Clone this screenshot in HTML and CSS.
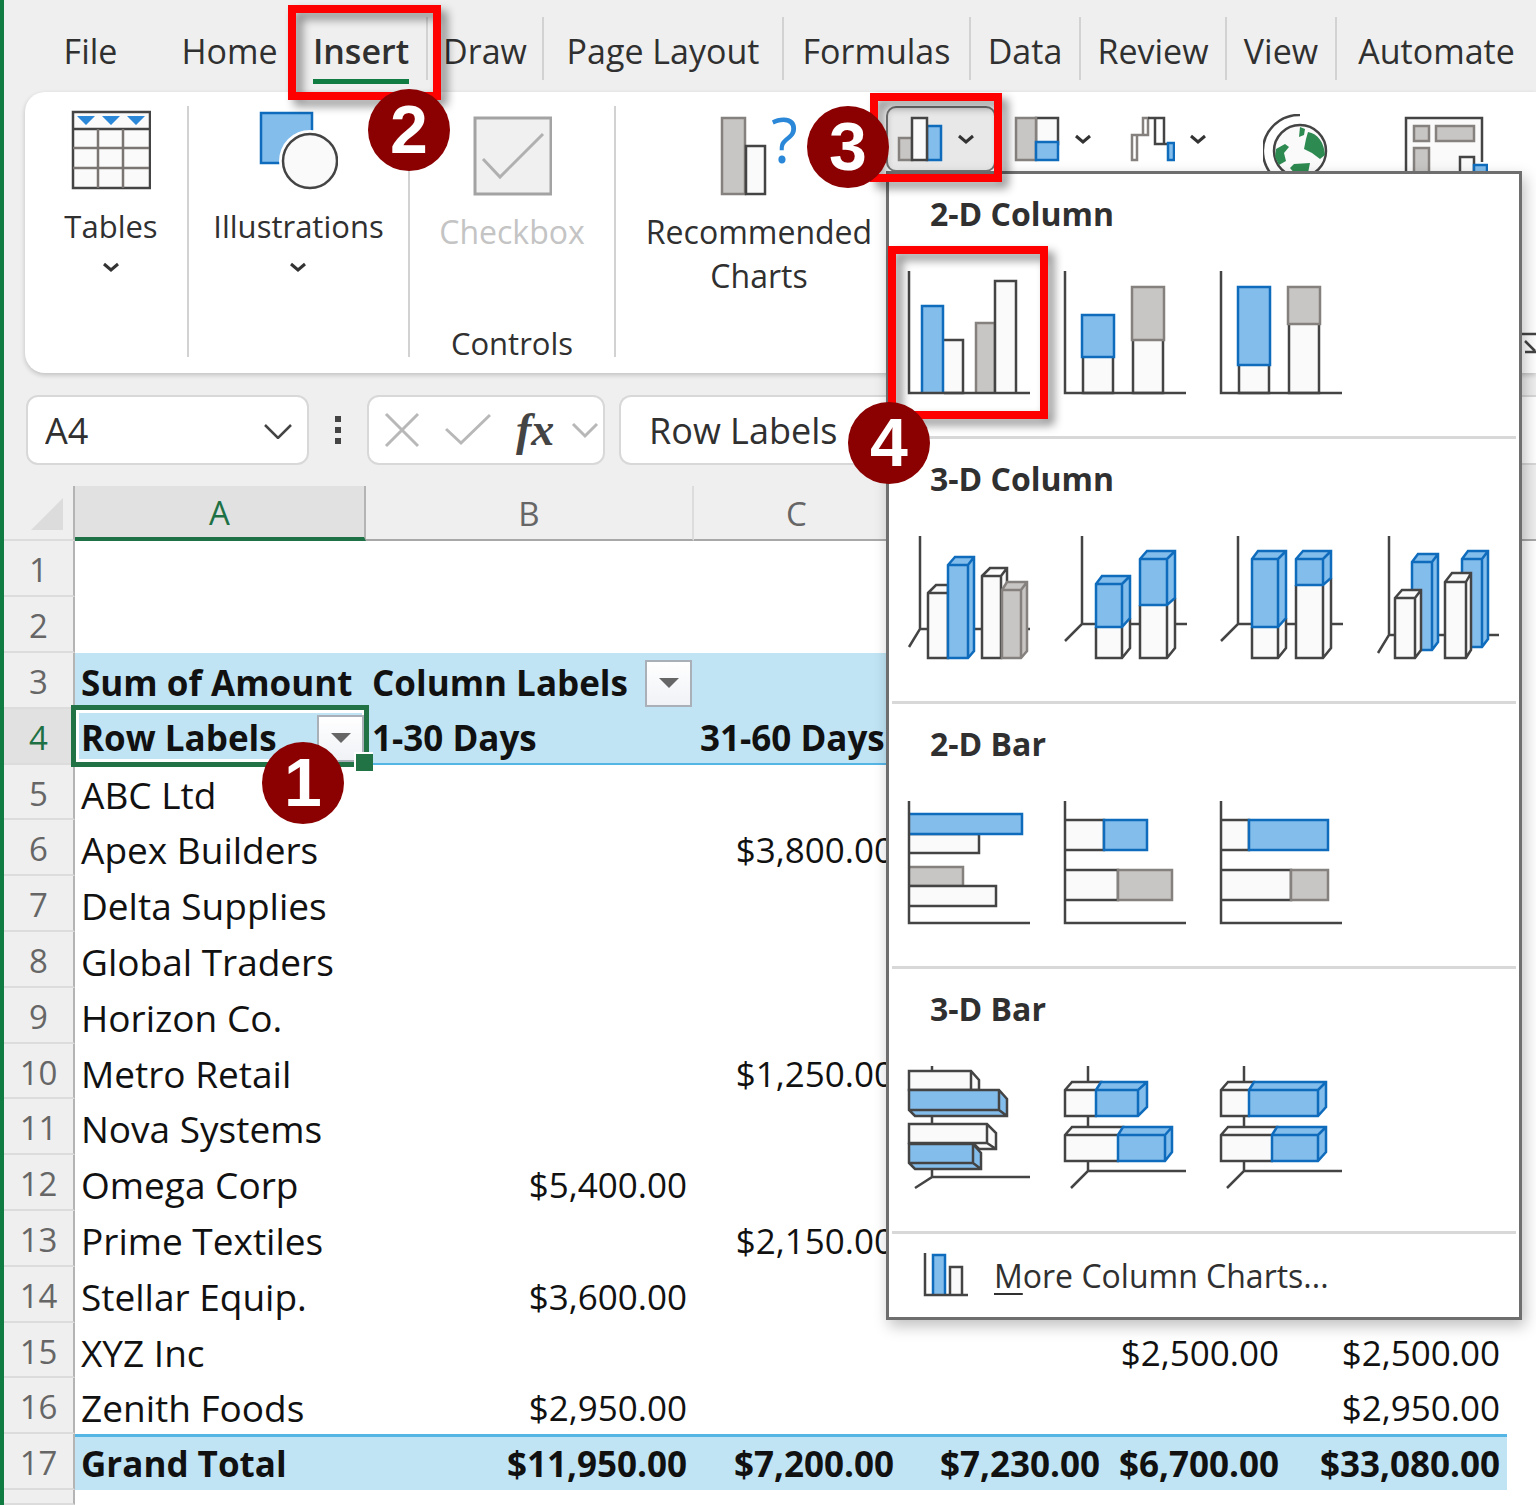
FILE: index.html
```html
<!DOCTYPE html>
<html lang="en">
<head>
<meta charset="utf-8">
<title>Pivot table – Insert column chart</title>
<link rel="stylesheet" href="styles.css">
</head>
<body>
<div class="app">

  <nav class="tabs" aria-label="Ribbon tabs">
    <button class="tab">File</button>
    <button class="tab">Home</button>
    <button class="tab tab-active ruled"><span>Insert</span>
      <i class="mark mark-insert"></i><b class="step step-2">2</b></button>
    <button class="tab ruled">Draw</button>
    <button class="tab ruled">Page Layout</button>
    <button class="tab ruled">Formulas</button>
    <button class="tab ruled">Data</button>
    <button class="tab ruled">Review</button>
    <button class="tab ruled">View</button>
    <button class="tab">Automate</button>
  </nav>

  <section class="ribbon">
    <div class="group">
      <button class="tool">
        <svg width="80" height="80" viewBox="0 0 80 80">
          <rect class="white dark" x="2" y="2" width="77" height="76"/>
          <path class="line" d="M2 19H78"/>
          <path class="line thin" d="M27 19V78M52 19V78M2 38H78M2 58H78"/>
          <path fill="#2b88d8" d="M6 6H24L15 15ZM31 6H49L40 15ZM56 6H74L65 15Z"/>
        </svg>
        <span>Tables</span>
        <svg class="caret" width="18" height="10" viewBox="0 0 18 10"><path d="M2 2L9 8L16 2"/></svg>
      </button>
    </div>
    <div class="group">
      <button class="tool">
        <svg width="80" height="80" viewBox="0 0 80 80">
          <rect class="blue" x="3" y="3" width="51" height="50"/>
          <circle cx="52" cy="51" r="31" fill="#fff"/>
          <circle class="white dark" cx="52" cy="51" r="27"/>
        </svg>
        <span>Illustrations</span>
        <svg class="caret" width="18" height="10" viewBox="0 0 18 10"><path d="M2 2L9 8L16 2"/></svg>
      </button>
    </div>
    <div class="group group-low">
      <button class="tool" disabled>
        <svg width="80" height="80" viewBox="0 0 80 80">
          <rect x="3" y="2" width="76" height="76" fill="#f0f0f0" stroke="#a3a3a3" stroke-width="3"/>
          <path d="M11 43L28 61L71 18" fill="none" stroke="#b0b0b0" stroke-width="3"/>
        </svg>
        <span>Checkbox</span>
      </button>
      <span class="group-name">Controls</span>
    </div>
    <div class="group group-low group-charts">
      <button class="tool">
        <svg class="spill" width="80" height="80" viewBox="0 0 80 80">
          <rect class="grey" x="3" y="2" width="23" height="76"/>
          <rect class="white dark" x="27" y="30" width="19" height="48"/>
          <text x="52" y="47" class="query">?</text>
        </svg>
        <span>Recommended<br>Charts</span>
      </button>
    </div>
    <div class="charts">
      <button class="drop drop-open" aria-label="Column or bar chart">
        <svg width="46" height="46" viewBox="0 0 46 46">
          <rect class="grey" x="2" y="22" width="13" height="22"/>
          <rect class="blue" x="30" y="10" width="14" height="34"/>
          <rect class="white dark" x="15" y="2" width="15" height="42"/>
        </svg>
        <svg class="caret" width="18" height="10" viewBox="0 0 18 10"><path d="M2 2L9 8L16 2"/></svg>
      </button>
      <button class="drop" aria-label="Hierarchy chart">
        <svg width="46" height="46" viewBox="0 0 46 46">
          <rect class="white dark" x="22" y="2" width="22" height="26"/>
          <rect class="grey" x="2" y="2" width="20" height="42"/>
          <rect class="blue" x="22" y="26" width="22" height="18"/>
        </svg>
        <svg class="caret" width="18" height="10" viewBox="0 0 18 10"><path d="M2 2L9 8L16 2"/></svg>
      </button>
      <button class="drop" aria-label="Waterfall chart">
        <svg width="46" height="46" viewBox="0 0 46 46">
          <path class="grey nofill" d="M3 44V19H8V44ZM8 19H14V2H19V19H14"/>
          <path class="line" d="M19 2H35V28H26V2M35 28H39"/>
          <rect class="blue" x="39" y="27" width="6" height="17"/>
        </svg>
        <svg class="caret" width="18" height="10" viewBox="0 0 18 10"><path d="M2 2L9 8L16 2"/></svg>
      </button>
      <button class="big" aria-label="Maps">
        <svg width="70" height="76" viewBox="0 0 70 76">
          <circle class="white dark" cx="37" cy="37" r="26"/>
          <path fill="#2d8a50" d="M37 13L42 15L41 21L36 23ZM45 18C55 20 61 28 62 41L57 45L49 39L41 35L43 25ZM22 30L26 33L21 39L23 47L16 51L12 43L13 35ZM31 50L47 49L45 59L39 65L33 61L27 54Z"/>
          <path class="line" d="M37 1A36 36 0 0 0 11 63"/>
        </svg>
      </button>
      <button class="big" aria-label="PivotChart">
        <svg width="84" height="76" viewBox="0 0 84 76">
          <path class="white dark" d="M2 76V4H78V48"/>
          <path class="grey" d="M10 12H25V27H10ZM32 12H70V27H32ZM10 34H25V76H10Z"/>
          <rect class="white dark" x="56" y="43" width="14" height="40"/>
          <rect class="blue" x="70" y="51" width="13" height="30"/>
        </svg>
      </button>
      <i class="mark mark-drop"></i><b class="step step-3">3</b>

      <div class="menu" role="menu">
        <section class="kind">
          <h2>2-D Column</h2>
          <div class="choices">
            <button class="choice" aria-label="Clustered column">
              <svg width="126" height="124" viewBox="0 0 126 124">
                <path class="white dark" d="M37 69H56V122H37"/>
                <path class="blue" d="M15 122V35H36V122"/>
                <path class="grey" d="M69 122V52H88V122"/>
                <path class="white dark" d="M88 122V10H109V122"/>
                <path class="line" d="M2 0V122H123"/>
              </svg>
              <i class="mark mark-choice"></i><b class="step step-4">4</b>
            </button>
            <button class="choice" aria-label="Stacked column">
              <svg width="126" height="124" viewBox="0 0 126 124">
                <path class="white dark" d="M20 86V122H50V86M70 69V122H100V69"/>
                <rect class="blue" x="19" y="44" width="32" height="42"/>
                <rect class="grey" x="69" y="16" width="32" height="53"/>
                <path class="line" d="M2 0V122H123"/>
              </svg>
            </button>
            <button class="choice" aria-label="100% stacked column">
              <svg width="126" height="124" viewBox="0 0 126 124">
                <path class="white dark" d="M20 94V122H50V94M70 53V122H100V53"/>
                <rect class="blue" x="19" y="16" width="32" height="78"/>
                <rect class="grey" x="69" y="16" width="32" height="37"/>
                <path class="line" d="M2 0V122H123"/>
              </svg>
            </button>
          </div>
        </section>
        <section class="kind">
          <h2>3-D Column</h2>
          <div class="choices">
            <button class="choice" aria-label="3-D clustered column">
              <svg width="126" height="124" viewBox="0 0 126 124">
                <path class="line" d="M13 0V93L2 111M13 93H123"/>
                <path class="white dark" d="M21 57L29 49H41V122H21ZM21 57H41"/>
                <path class="blue" d="M41 29L48 21H67V115L61 122H41ZM41 29H61V122M61 29L67 21"/>
                <path class="white dark" d="M75 40L83 32H100V54H94V122H75ZM75 40H94L100 32M94 40V56"/>
                <path class="grey" d="M95 54L100 46H120V115L114 122H95ZM95 54H114V122M114 54L120 46"/>
              </svg>
            </button>
            <button class="choice" aria-label="3-D stacked column">
              <svg width="126" height="124" viewBox="0 0 126 124">
                <path class="line" d="M19 0V88L2 105M19 88H124"/>
                <path class="white dark" d="M33 91V122H59L67 112V82M59 122V91M77 69V122H104L112 112V62M104 122V69"/>
                <path class="blue" d="M33 48L39 40H67V82L59 91H33ZM33 48H59V91M59 48L67 40"/>
                <path class="blue" d="M77 23L84 15H112V62L104 69H77ZM77 23H104V69M104 23L112 15"/>
              </svg>
            </button>
            <button class="choice" aria-label="3-D 100% stacked column">
              <svg width="126" height="124" viewBox="0 0 126 124">
                <path class="line" d="M19 0V88L2 105M19 88H124"/>
                <path class="white dark" d="M33 91V122H59L67 112V82M59 122V91M77 49V122H104L112 112V42M104 122V49"/>
                <path class="blue" d="M33 23L39 15H67V82L59 91H33ZM33 23H59V91M59 23L67 15"/>
                <path class="blue" d="M77 23L84 15H112V42L104 49H77ZM77 23H104V49M104 23L112 15"/>
              </svg>
            </button>
            <button class="choice" aria-label="3-D column">
              <svg width="126" height="124" viewBox="0 0 126 124">
                <path class="line" d="M14 0V99L3 117M14 99H124"/>
                <path class="blue" d="M37 26L43 18H63V106L57 114H37ZM37 26H57V114M57 26L63 18"/>
                <path class="blue" d="M87 23L93 15H113V103L107 111H87ZM87 23H107V111M107 23L113 15"/>
                <path class="white dark" d="M20 62L27 54H46V114L40 122H20ZM20 62H40V122M40 62L46 54"/>
                <path class="white dark" d="M70 46L77 37H96V114L91 122H70ZM70 46H91V122M91 46L96 37"/>
              </svg>
            </button>
          </div>
        </section>
        <section class="kind">
          <h2>2-D Bar</h2>
          <div class="choices">
            <button class="choice" aria-label="Clustered bar">
              <svg width="126" height="124" viewBox="0 0 126 124">
                <path class="white dark" d="M2 33H72V52H2"/>
                <path class="grey" d="M2 66H56V85H2"/>
                <path class="white dark" d="M2 85H89V105H2"/>
                <path class="blue" d="M2 13H115V33H2"/>
                <path class="line" d="M2 0V122H123"/>
              </svg>
            </button>
            <button class="choice" aria-label="Stacked bar">
              <svg width="126" height="124" viewBox="0 0 126 124">
                <path class="white dark" d="M2 19H41V49H2M2 69H55V99H2"/>
                <rect class="blue" x="41" y="19" width="43" height="30"/>
                <rect class="grey" x="55" y="69" width="54" height="30"/>
                <path class="line" d="M2 0V122H123"/>
              </svg>
            </button>
            <button class="choice" aria-label="100% stacked bar">
              <svg width="126" height="124" viewBox="0 0 126 124">
                <path class="white dark" d="M2 19H30V49H2M2 69H72V99H2"/>
                <rect class="blue" x="30" y="19" width="79" height="30"/>
                <rect class="grey" x="72" y="69" width="37" height="30"/>
                <path class="line" d="M2 0V122H123"/>
              </svg>
            </button>
          </div>
        </section>
        <section class="kind">
          <h2>3-D Bar</h2>
          <div class="choices">
            <button class="choice" aria-label="3-D clustered bar">
              <svg width="126" height="124" viewBox="0 0 126 124">
                <path class="line" d="M25 0V111L8 122M25 111H123"/>
                <path class="white dark" d="M2 5H64L72 14V24H2ZM64 5V24"/>
                <path class="blue dark" d="M2 24H92L100 33V50H8L2 44ZM92 24V44H2M92 44L100 50"/>
                <path class="white dark" d="M2 58H80L89 67V83H72L66 77H2ZM80 58V77H66M80 77L89 83"/>
                <path class="blue dark" d="M2 78H66L74 87V103H8L2 97ZM66 78V97H2M66 97L74 103"/>
              </svg>
            </button>
            <button class="choice" aria-label="3-D stacked bar">
              <svg width="126" height="124" viewBox="0 0 126 124">
                <path class="line" d="M25 0V105L8 122M25 105H123"/>
                <path class="white dark" d="M2 24L9 16H38L33 50H2ZM2 24H33M2 69L9 61H60L55 95H2ZM2 69H55"/>
                <path class="blue" d="M33 24L38 16H84V41L75 50H33ZM33 24H75V50M75 24L84 16"/>
                <path class="blue" d="M55 69L60 61H109V86L102 95H55ZM55 69H102V95M102 69L109 61"/>
              </svg>
            </button>
            <button class="choice" aria-label="3-D 100% stacked bar">
              <svg width="126" height="124" viewBox="0 0 126 124">
                <path class="line" d="M25 0V105L8 122M25 105H123"/>
                <path class="white dark" d="M2 24L9 16H35L30 50H2ZM2 24H30M2 69L9 61H58L53 95H2ZM2 69H53"/>
                <path class="blue" d="M30 24L35 16H107V41L99 50H30ZM30 24H99V50M99 24L107 16"/>
                <path class="blue" d="M53 69L58 61H107V86L99 95H53ZM53 69H99V95M99 69L107 61"/>
              </svg>
            </button>
          </div>
        </section>
        <button class="more" role="menuitem">
          <svg width="46" height="46" viewBox="0 0 46 46">
            <path class="blue" d="M10 42V2H22V42"/>
            <path class="white dark" d="M27 42V14H39V42"/>
            <path class="line" d="M2 0V42H45"/>
          </svg>
          <span><u>M</u>ore Column Charts...</span>
        </button>
      </div>
    </div>
    <svg class="launcher" width="20" height="24" viewBox="0 0 20 24"><path class="line" d="M0 2H20M9 9L19 19M20 20H9"/></svg>
  </section>

  <div class="formula-bar">
    <label class="box name-box">
      <input value="A4" aria-label="Name box">
      <svg width="30" height="18" viewBox="0 0 30 18"><path class="line" d="M2 4L15 17L28 4"/></svg>
    </label>
    <svg class="grip" width="8" height="30" viewBox="0 0 8 30"><path fill="#444" d="M1 1H7V7H1ZM1 12H7V18H1ZM1 23H7V29H1Z"/></svg>
    <div class="box edit-box">
      <button aria-label="Cancel"><svg width="36" height="36" viewBox="0 0 36 36"><path class="faint" d="M2 2L34 34M34 2L2 34"/></svg></button>
      <button aria-label="Enter"><svg width="46" height="36" viewBox="0 0 46 36"><path class="faint" d="M1 17L16 31L45 3"/></svg></button>
      <button class="fx">fx</button>
      <button aria-label="Function list"><svg width="28" height="18" viewBox="0 0 28 18"><path class="faint" d="M2 3L14 15L26 3"/></svg></button>
    </div>
    <input class="box formula" value="Row Labels" aria-label="Formula">
  </div>

  <table class="sheet">
    <colgroup><col class="w-head"><col class="w-a"><col class="w-b"><col class="w-c"><col class="w-d"><col class="w-e"><col class="w-f"><col></colgroup>
    <thead>
      <tr><th class="corner"><svg width="32" height="32" viewBox="0 0 32 32"><path fill="#dcdcdc" d="M32 0V32H0Z"/></svg></th><th class="current">A</th><th>B</th><th>C</th><th></th><th></th><th></th><th></th></tr>
    </thead>
    <tbody>
      <tr><th>1</th><td></td><td></td><td></td><td></td><td></td><td></td><td></td></tr>
      <tr><th>2</th><td></td><td></td><td></td><td></td><td></td><td></td><td></td></tr>
      <tr class="band"><th>3</th><td>Sum of Amount</td><td class="text"><div class="filtered">Column Labels<button class="filter" aria-label="Filter columns"></button></div></td><td></td><td></td><td></td><td></td><td></td></tr>
      <tr class="band band-head"><th class="current">4</th><td class="selected"><div class="filtered">Row Labels<button class="filter" aria-label="Filter rows"></button></div><i class="cursor"></i><b class="step step-1">1</b></td><td class="text">1-30 Days</td><td class="text">31-60 Days</td><td></td><td></td><td></td><td></td></tr>
      <tr><th>5</th><td>ABC Ltd</td><td></td><td></td><td></td><td></td><td></td><td></td></tr>
      <tr><th>6</th><td>Apex Builders</td><td></td><td>$3,800.00</td><td></td><td></td><td></td><td></td></tr>
      <tr><th>7</th><td>Delta Supplies</td><td></td><td></td><td></td><td></td><td></td><td></td></tr>
      <tr><th>8</th><td>Global Traders</td><td></td><td></td><td></td><td></td><td></td><td></td></tr>
      <tr><th>9</th><td>Horizon Co.</td><td></td><td></td><td></td><td></td><td></td><td></td></tr>
      <tr><th>10</th><td>Metro Retail</td><td></td><td>$1,250.00</td><td></td><td></td><td></td><td></td></tr>
      <tr><th>11</th><td>Nova Systems</td><td></td><td></td><td></td><td></td><td></td><td></td></tr>
      <tr><th>12</th><td>Omega Corp</td><td>$5,400.00</td><td></td><td></td><td></td><td></td><td></td></tr>
      <tr><th>13</th><td>Prime Textiles</td><td></td><td>$2,150.00</td><td></td><td></td><td></td><td></td></tr>
      <tr><th>14</th><td>Stellar Equip.</td><td>$3,600.00</td><td></td><td></td><td></td><td></td><td></td></tr>
      <tr><th>15</th><td>XYZ Inc</td><td></td><td></td><td></td><td>$2,500.00</td><td>$2,500.00</td><td></td></tr>
      <tr><th>16</th><td>Zenith Foods</td><td>$2,950.00</td><td></td><td></td><td></td><td>$2,950.00</td><td></td></tr>
      <tr class="band total"><th>17</th><td>Grand Total</td><td>$11,950.00</td><td>$7,200.00</td><td>$7,230.00</td><td>$6,700.00</td><td>$33,080.00</td><td></td></tr>
      <tr class="tail"><th></th><td></td><td></td><td></td><td></td><td></td><td></td><td></td></tr>
    </tbody>
  </table>
</div>
</body>
</html>
```
FILE: styles.css
```css
* { box-sizing: border-box; }

body {
  margin: 0;
  overflow: hidden;
  background: #efefef;
  color: #303030;
  font-family: "Open Sans", "Noto Sans", sans-serif;
  font-size: 32px;
}

button, input {
  margin: 0;
  padding: 0;
  border: 0;
  background: none;
  color: inherit;
  font: inherit;
}

svg { display: block; flex: none; }

.app {
  min-height: 100vh;
  border-left: 4px solid #107c41;
  display: flex;
  flex-direction: column;
}

/* icon strokes and fills */
.line, .dark, .blue, .grey { stroke-width: 2.5; }
.line { fill: none; stroke: #444; }
.thin { stroke: #7a7572; }
.white { fill: #fafafa; }
.blue { fill: #83bdec; stroke: #0f6cbd; }
.grey { fill: #c8c6c4; stroke: #85817e; }
.dark { stroke: #444; }
.nofill { fill: none; }
.faint { fill: none; stroke: #b8b8b8; stroke-width: 3; }
.query { fill: #2b88d8; font-size: 62px; }
.spill { overflow: visible; }
.caret { fill: none; stroke: #333; stroke-width: 3; }

/* tabs */
.tabs {
  display: grid;
  grid-template-columns: 145px 133px 132px 116px 240px 187px 110px 146px 110px 1fr;
  padding: 17px 0 12px 14px;
  font-size: 34px;
}
.tab {
  position: relative;
  height: 63px;
  padding-top: 4px;
  white-space: nowrap;
}
.ruled { border-right: 2px solid #d2d2d2; }
.tab-active { z-index: 3; font-weight: 600; }
.tab-active span {
  display: inline-block;
  height: 63px;
  line-height: 60px;
  border-bottom: 5px solid #107c41;
}

/* numbered callouts */
.mark {
  position: absolute;
  border: 8px solid #f00;
  filter: drop-shadow(6px 6px 5px rgba(0, 0, 0, .45));
}
.step {
  position: absolute;
  z-index: 5;
  width: 82px;
  height: 82px;
  border-radius: 50%;
  background: #8b0000;
  color: #fff;
  font: bold 68px/80px "Liberation Sans", sans-serif;
  text-align: center;
}
.mark-insert { left: -8px; top: -12px; width: 153px; height: 95px; }
.step-2 { left: 72px; top: 72px; }
.mark-drop { left: -16px; top: -13px; width: 132px; height: 89px; z-index: 3; }
.step-3 { left: -79px; top: 0; }
.mark-choice { left: -19px; top: -25px; width: 160px; height: 173px; }
.step-4 { left: -59px; top: 131px; }
.step-1 { left: 187px; top: 33px; z-index: 1; }

/* ribbon */
.ribbon {
  position: relative;
  z-index: 2;
  display: flex;
  height: 281px;
  margin-left: 21px;
  padding: 14px 0 16px;
  border-radius: 20px 0 0 20px;
  background: #fff;
  box-shadow: 0 2px 5px rgba(0, 0, 0, .2);
}
.group {
  display: flex;
  flex-direction: column;
  align-items: center;
  justify-content: space-between;
  flex: none;
  width: 221px;
  padding-top: 4px;
  border-right: 2px solid #d2d2d2;
  font-size: 31px;
}
.group:first-child { width: 164px; padding-left: 10px; }
.group-low { width: 206px; padding-top: 10px; }
.group-low .tool { font-size: 32px; }
.group-charts { width: 270px; padding-left: 16px; border: 0; }
.tool {
  display: flex;
  flex-direction: column;
  align-items: center;
  gap: 14px;
  line-height: 44px;
  white-space: nowrap;
}
.tool:disabled { color: #c4c4c4; }
.group-name { line-height: 44px; margin-bottom: -8px; }
.charts {
  position: relative;
  display: flex;
  align-items: flex-start;
  gap: 9px;
}
.drop {
  display: flex;
  align-items: center;
  gap: 14px;
  height: 66px;
  padding: 0 19px 0 9px;
}
.drop-open {
  border: 2px solid #777;
  border-radius: 10px;
  background: #e8e8e8;
}
.big { padding: 8px 34px 0 28px; }
.launcher { position: absolute; right: 0; top: 240px; }

/* chart menu */
.menu {
  position: absolute;
  left: 0;
  top: 65px;
  z-index: 2;
  width: 636px;
  padding: 0 3px;
  border: 3px solid #6e6e6e;
  background: #fff;
  box-shadow: 3px 6px 14px rgba(0, 0, 0, .25);
}
.kind { height: 265px; border-bottom: 3px solid #d8d8d8; }
.kind h2 {
  margin: 0;
  padding: 17px 0 0 38px;
  font-size: 32px;
  font-weight: 700;
  line-height: 46px;
}
.choices { display: flex; gap: 30px; padding: 34px 0 0 15px; }
.choice { position: relative; }
.more {
  display: flex;
  align-items: center;
  gap: 25px;
  width: 100%;
  height: 83px;
  padding-left: 31px;
}
.more u { text-underline-offset: 5px; text-decoration-thickness: 2px; }

/* formula bar */
.formula-bar {
  display: flex;
  align-items: center;
  padding: 22px 0 21px 22px;
  font-size: 36px;
}
.box {
  height: 70px;
  border: 2px solid #d8d8d8;
  border-radius: 12px;
  background: #fff;
}
.name-box {
  display: flex;
  align-items: center;
  width: 283px;
  padding: 0 14px 0 17px;
}
.name-box input { flex: 1; min-width: 0; }
.grip { margin: 0 25px; }
.edit-box {
  display: flex;
  align-items: center;
  gap: 25px;
  width: 238px;
  margin-right: 14px;
  padding-left: 15px;
}
.edit-box .fx { margin-right: -8px; font: italic bold 46px/60px "Liberation Serif", serif; color: #444; }
.formula { flex: 1; min-width: 0; border-right: 0; border-radius: 12px 0 0 12px; padding-left: 28px; }

/* worksheet */
.sheet {
  width: 100%;
  table-layout: fixed;
  border-collapse: separate;
  border-spacing: 0;
  background: #fff;
  color: #111;
  font-size: 35px;
  line-height: 48px;
}
.w-head { width: 71px; }
.w-a { width: 291px; }
.w-b { width: 328px; }
.w-c { width: 207px; }
.w-d { width: 206px; }
.w-e { width: 179px; }
.w-f { width: 221px; }
.sheet th {
  padding: 4px 0 0;
  background: #efefef;
  color: #666;
  font-size: 33px;
  font-weight: 400;
}
.sheet thead th {
  height: 55px;
  padding-top: 2px;
  border-right: 2px solid #dcdcdc;
  border-bottom: 2px solid #a8a8a8;
}
.sheet thead th:last-child { border-right: 0; }
.sheet thead .corner { padding-left: 27px; border-right-color: #b4b4b4; border-bottom-color: #dcdcdc; }
.sheet thead .current { border-bottom: 4px solid #1e7145; border-right-color: #b4b4b4; }
.sheet .current { background: #e1e1e1; color: #1e7145; }
.sheet tbody tr { height: 56px; }
.sheet tbody tr:nth-child(5n) { height: 55px; }
.sheet tbody th { border-right: 2px solid #b4b4b4; border-bottom: 2px solid #dcdcdc; }
.sheet td {
  position: relative;
  padding: 4px 7px 0 0;
  text-align: right;
  white-space: nowrap;
}
.sheet td:nth-child(2), .sheet .text { padding: 4px 0 0 6px; text-align: left; }
.sheet td:nth-child(2) { font-size: 37px; }
.sheet .band td { font-size: 35px; font-weight: 700; background: #c0e4f4; }
.sheet .band td:last-child { background: #fff; }
.band-head td:not(:last-child) { border-bottom: 2px solid #55b5e5; }
.sheet .total td { padding-top: 0; }
.total td:not(:last-child) { border-top: 3px solid #55b5e5; }
.filtered { display: flex; align-items: center; justify-content: space-between; padding-right: 2px; }
.filter {
  width: 47px;
  height: 47px;
  border: 2px solid #aab0b8;
  background: linear-gradient(#fff, #f0f2f6);
}
.filter::before {
  content: "";
  display: block;
  width: 0;
  margin: 0 auto;
  border: 10px solid transparent;
  border-top-color: #666;
  border-bottom: 0;
}
.cursor {
  position: absolute;
  inset: -4px -3px -4px -4px;
  border: 5px solid #217346;
}
.cursor::after {
  content: "";
  position: absolute;
  right: -9px;
  bottom: -9px;
  width: 17px;
  height: 17px;
  border: 2px solid #fff;
  border-width: 2px 0 0 2px;
  background: #217346;
}
.selected { z-index: 1; box-shadow: inset 0 0 0 4px #fff; }
.sheet .tail { height: 15px; line-height: 0; }
.sheet .tail > * { padding: 0; }
```
